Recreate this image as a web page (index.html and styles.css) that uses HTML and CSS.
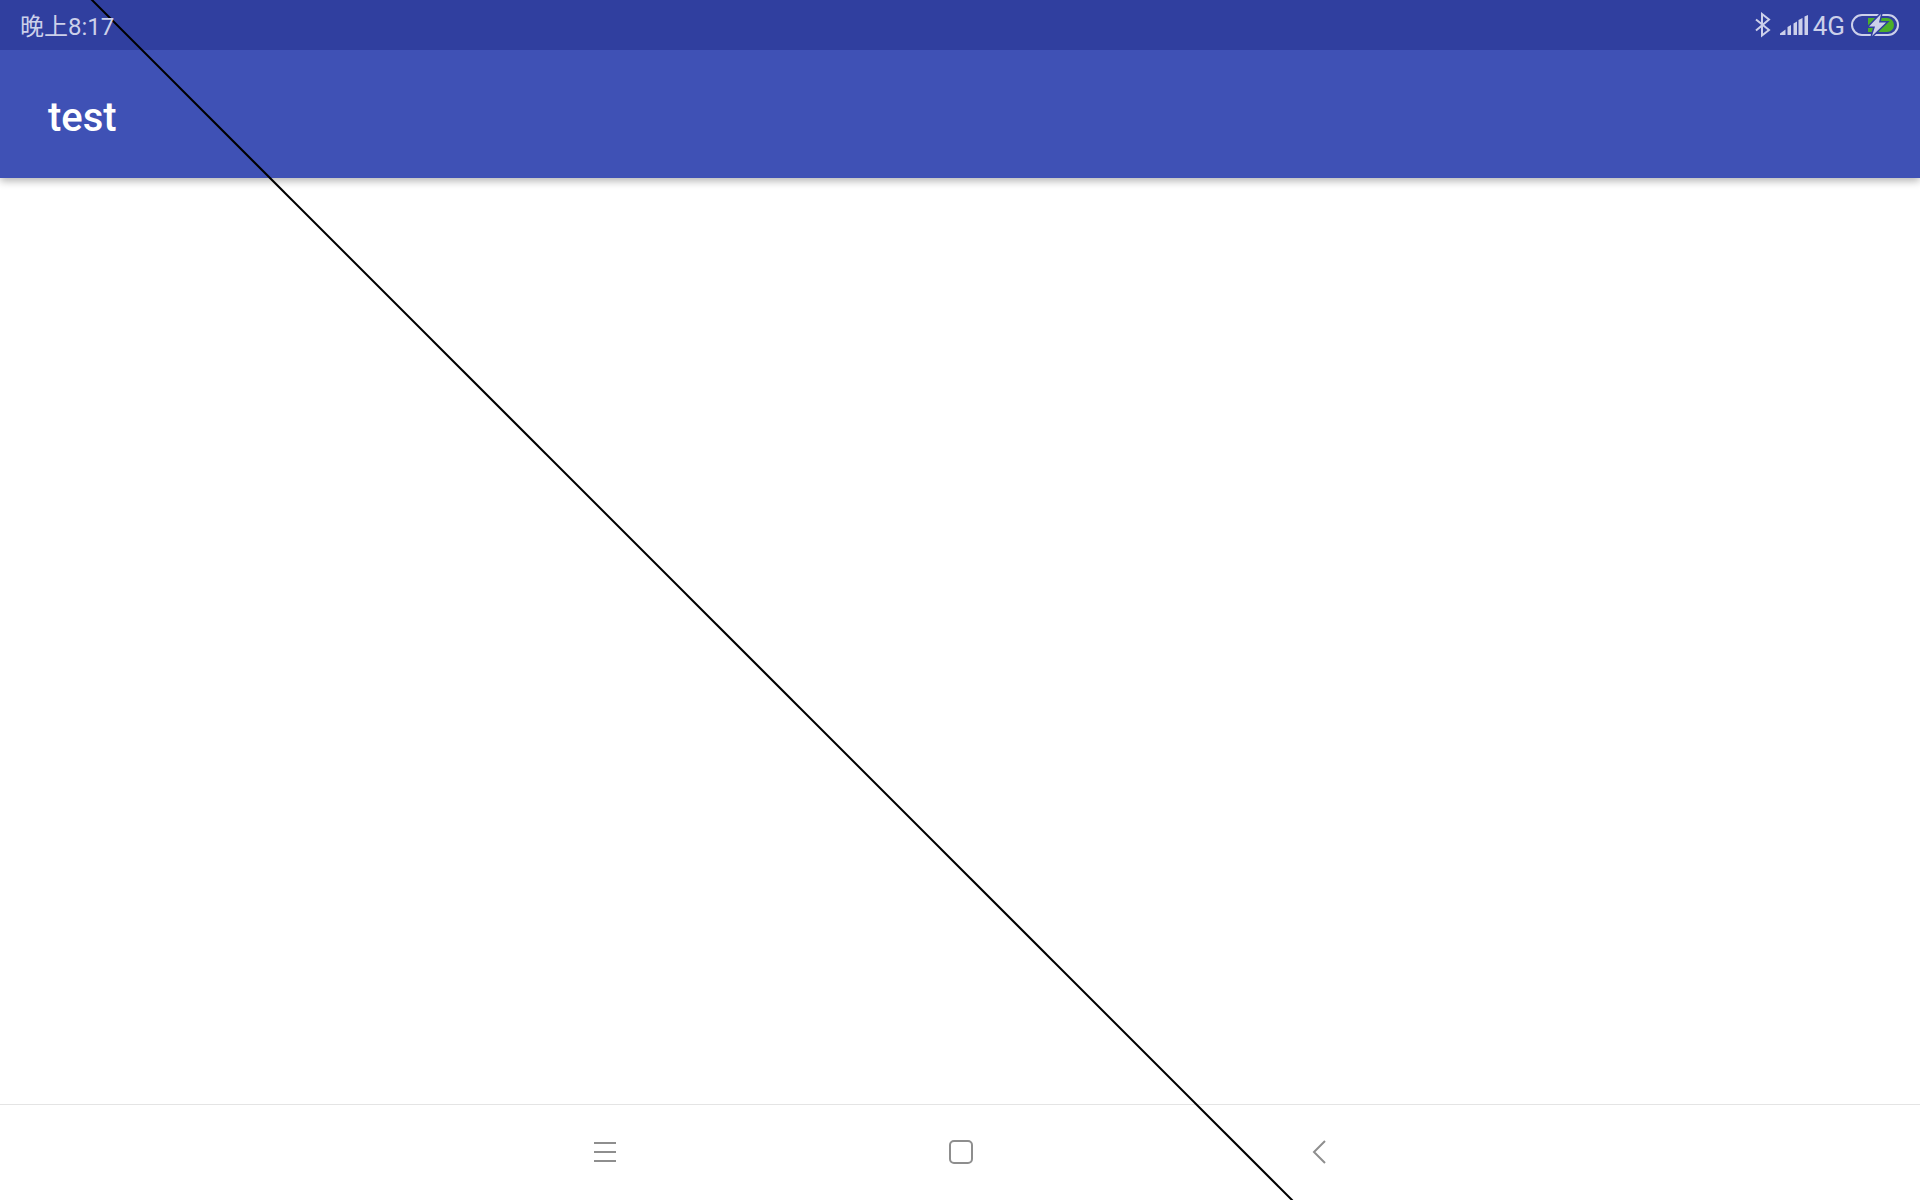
FILE: index.html
```html
<!DOCTYPE html>
<html lang="zh">
<head>
    <meta charset="UTF-8">
    <meta name="viewport" content="width=device-width, initial-scale=1.0">
    <title>test</title>
    <link rel="stylesheet" href="styles.css">
</head>
<body>
    <header>
        <div class="status-bar">
            <span class="clock">晚上8:17</span>
            <div class="status-icons">
                <svg class="bluetooth" width="16" height="26" viewBox="0 0 16 26">
                    <path d="M1 7.500L14 18L7 23.500V2L14 7.500L1 18.500" />
                </svg>
                <svg class="signal" width="28" height="20" viewBox="0 0 28 20">
                    <path d="M0 20V18.500L5.500 14.500V20ZM7.500 20V12L11 10V20ZM13.500 20V8.500L17 6.500V20ZM18.500 20V5L22.500 3V20ZM24.500 20V1.500L28 0V20Z" />
                </svg>
                <span class="network">4G</span>
                <svg class="battery" width="48" height="22" viewBox="0 0 48 22">
                    <rect class="battery-case" x="1" y="1" width="46" height="20" rx="10" />
                    <path class="battery-level" d="M17 4H36A7 7 0 0 1 36 18H17Z" />
                    <path class="bolt" d="M30 0L18 12.500H24L21 22L35 8.500H28Z" />
                </svg>
            </div>
        </div>
        <div class="app-bar">
            <h1>test</h1>
        </div>
    </header>

    <main></main>

    <nav class="nav-bar">
        <button type="button" aria-label="Menu">
            <svg width="24" height="24" viewBox="0 0 24 24">
                <path d="M2 3H24M2 12H24M2 21H24" />
            </svg>
        </button>
        <button type="button" aria-label="Home">
            <svg width="24" height="24" viewBox="0 0 24 24">
                <rect x="2" y="1" width="22" height="22" rx="4" />
            </svg>
        </button>
        <button type="button" aria-label="Back">
            <svg width="24" height="24" viewBox="0 0 24 24">
                <path d="M21 1L10 12L21 23" />
            </svg>
        </button>
    </nav>

    <!-- the line runs over the whole screen, under the status text -->
    <svg class="line-view">
        <line x1="91" y1="-1" x2="4092" y2="4000" />
    </svg>
</body>
</html>
```

FILE: styles.css
```css
body {
    font-family: Roboto, "Noto Sans CJK SC", sans-serif;
    margin: 0;
    background: #fff;
    display: flex;
    flex-direction: column;
    min-height: 100vh;
}
header {
    background: #3f51b5;
    box-shadow: 0 3px 8px rgba(0, 0, 0, 0.3);
}
.status-bar {
    display: flex;
    justify-content: space-between;
    align-items: center;
    height: 50px;
    padding: 0 21px 0 20px;
    background: #303f9f;
    color: #ccd0ea;
}
.clock,
.status-icons {
    position: relative;
    z-index: 2;
}
.clock {
    font-size: 24px;
    line-height: 32px;
    padding-top: 4px;
}
.status-icons {
    display: flex;
    align-items: center;
}
.bluetooth {
    fill: none;
    stroke: #ccd0ea;
    stroke-width: 2;
    margin-right: 9px;
}
.signal {
    fill: #ccd0ea;
    margin-right: 5px;
}
.network {
    font-size: 26px;
    line-height: 32px;
    padding-top: 2px;
    margin-right: 6px;
}
.battery {
    overflow: visible;
}
.battery-case {
    fill: none;
    stroke: #ccd0ea;
    stroke-width: 2;
}
.battery-level {
    fill: #4caf2a;
}
.bolt {
    fill: #ccd0ea;
    stroke: #303f9f;
    stroke-width: 3;
    paint-order: stroke;
}
.app-bar {
    display: flex;
    align-items: center;
    box-sizing: border-box;
    height: 128px;
    padding: 8px 48px 0;
}
h1 {
    margin: 0;
    color: #fff;
    font-size: 40px;
    font-weight: 500;
    line-height: 48px;
}
main {
    flex: 1;
}
.nav-bar {
    display: flex;
    justify-content: center;
    box-sizing: border-box;
    height: 96px;
    padding-bottom: 2px;
    border-top: 1px solid #e4e4e4;
}
.nav-bar button {
    display: flex;
    justify-content: center;
    align-items: center;
    width: 356px;
    padding: 0;
    border: none;
    background: none;
    cursor: pointer;
}
.nav-bar svg {
    overflow: visible;
    fill: none;
    stroke: #8e8e8e;
    stroke-width: 2;
}
.line-view {
    position: absolute;
    top: 0;
    left: 0;
    width: 100%;
    height: 100%;
    z-index: 1;
    pointer-events: none;
}
.line-view line {
    stroke: #000;
    stroke-width: 2;
}
```
